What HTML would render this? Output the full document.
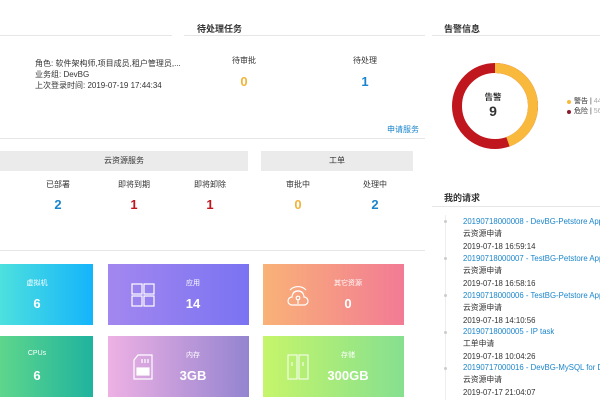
<!DOCTYPE html>
<html><head><meta charset="utf-8"><style>
*{margin:0;padding:0;box-sizing:border-box}
body{width:600px;height:400px;overflow:hidden;background:#fff;font-family:"Liberation Sans","Noto Sans CJK SC",sans-serif;position:relative;color:#333}
.a{position:absolute}
.t{font-size:8px;color:#333;white-space:nowrap}
.h{font-size:9px;color:#333;font-weight:bold}
.line{position:absolute;height:1px;background:#e6e6e6}
.c{text-align:center}
.num{font-size:13px;font-weight:bold}
.card{position:absolute;color:#fff}
.card .l{position:absolute;font-size:7px;width:60px;text-align:center}
.card .n{position:absolute;font-size:13px;font-weight:bold;width:60px;text-align:center}
.clip{position:absolute;left:432px;top:207px;width:168px;height:193px;overflow:hidden}
.req{position:absolute;left:31px;font-size:7.8px;line-height:12.3px;white-space:nowrap}
.req .b{color:#1a85cc}
.dot{position:absolute;left:12px;width:3px;height:3px;border-radius:50%;background:#ccc}
</style></head><body>
<!-- panel 1 -->
<div class="line" style="left:0;top:35px;width:172px"></div>
<div class="a t" style="left:35px;top:58px;line-height:11px">角色: 软件架构师,项目成员,租户管理员,...<br>业务组: DevBG<br>上次登录时间: 2019-07-19 17:44:34</div>
<!-- panel 2 -->
<div class="a h" style="left:197px;top:22px">待处理任务</div>
<div class="line" style="left:184px;top:35px;width:241px"></div>
<div class="a t c" style="left:214px;top:55px;width:60px">待审批</div>
<div class="a num c" style="left:214px;top:74px;width:60px;color:#f0b43c">0</div>
<div class="a t c" style="left:335px;top:55px;width:60px">待处理</div>
<div class="a num c" style="left:335px;top:74px;width:60px;color:#1a85cc">1</div>
<!-- cloud section -->
<div class="a t" style="left:387px;top:124px;color:#1a85cc">申请服务</div>
<div class="line" style="left:0;top:138px;width:425px"></div>
<div class="a t c" style="left:0;top:151px;width:248px;height:20px;line-height:20px;background:#ebebeb">云资源服务</div>
<div class="a t c" style="left:261px;top:151px;width:152px;height:20px;line-height:20px;background:#ebebeb">工单</div>
<div class="a t c" style="left:28px;top:179px;width:60px">已部署</div>
<div class="a num c" style="left:28px;top:197px;width:60px;color:#1a85cc">2</div>
<div class="a t c" style="left:104px;top:179px;width:60px">即将到期</div>
<div class="a num c" style="left:104px;top:197px;width:60px;color:#c0161d">1</div>
<div class="a t c" style="left:180px;top:179px;width:60px">即将卸除</div>
<div class="a num c" style="left:180px;top:197px;width:60px;color:#c0161d">1</div>
<div class="a t c" style="left:268px;top:179px;width:60px">审批中</div>
<div class="a num c" style="left:268px;top:197px;width:60px;color:#f0b43c">0</div>
<div class="a t c" style="left:345px;top:179px;width:60px">处理中</div>
<div class="a num c" style="left:345px;top:197px;width:60px;color:#1a85cc">2</div>
<div class="line" style="left:0;top:250px;width:425px"></div>
<!-- cards -->
<div class="card" style="left:0;top:264px;width:93px;height:61px;background:linear-gradient(90deg,#4de0de,#15b4fb)"><div class="l" style="left:7px;top:14px">虚拟机</div><div class="n" style="left:7px;top:32px">6</div></div>
<div class="card" style="left:108px;top:264px;width:141px;height:61px;background:linear-gradient(90deg,#a387ef,#7a73f2)">
<svg class="a" style="left:23px;top:19px" width="24" height="24" fill="none" stroke="#fff" stroke-width="1.2"><rect x="1" y="1" width="10" height="10"/><rect x="13" y="1" width="10" height="10"/><rect x="1" y="13" width="10" height="10"/><rect x="13" y="13" width="10" height="10"/></svg>
<div class="l" style="left:55px;top:14px">应用</div><div class="n" style="left:55px;top:32px">14</div></div>
<div class="card" style="left:263px;top:264px;width:141px;height:61px;background:linear-gradient(90deg,#f9b277,#f27b95)">
<svg class="a" style="left:22px;top:17px" width="26" height="26" fill="none" stroke="#fff" stroke-width="1.2"><path d="M5 9a11 11 0 0 1 16 0M8 12a7 7 0 0 1 10 0"/><path d="M7 24h12a4 4 0 0 0 0-8 6 6 0 0 0-12 0 4 4 0 0 0 0 8z"/><circle cx="13" cy="17" r="1.8"/><path d="M13 19v4"/></svg>
<div class="l" style="left:55px;top:14px">其它资源</div><div class="n" style="left:55px;top:32px">0</div></div>
<div class="card" style="left:0;top:336px;width:93px;height:61px;background:linear-gradient(90deg,#5ed68c,#1fb39e)"><div class="l" style="left:7px;top:14px">CPUs</div><div class="n" style="left:7px;top:32px">6</div></div>
<div class="card" style="left:108px;top:336px;width:141px;height:61px;background:linear-gradient(90deg,#eeb1e4,#9484d0)">
<svg class="a" style="left:24px;top:18px" width="22" height="26" fill="none" stroke="#fff" stroke-width="1.2"><path d="M6 1h14v24H2V6z"/><path d="M10 5v4M13 5v4M16 5v4"/><rect x="5" y="14" width="12" height="7" fill="#fff"/></svg>
<div class="l" style="left:55px;top:14px">内存</div><div class="n" style="left:55px;top:32px">3GB</div></div>
<div class="card" style="left:263px;top:336px;width:141px;height:61px;background:linear-gradient(90deg,#c6f56a,#86e08f)">
<svg class="a" style="left:24px;top:18px" width="22" height="26" fill="none" stroke="rgba(255,255,255,.8)" stroke-width="1.2"><rect x="1" y="1" width="9" height="24"/><rect x="12" y="1" width="9" height="24"/><path d="M5 8v4M16 8v4"/></svg>
<div class="l" style="left:55px;top:14px">存储</div><div class="n" style="left:55px;top:32px">300GB</div></div>
<!-- alert panel -->
<div class="a h" style="left:444px;top:22px">告警信息</div>
<div class="line" style="left:432px;top:35px;width:168px"></div>
<svg class="a" style="left:450px;top:62px" width="90" height="90"><circle cx="45" cy="44" r="38" fill="none" stroke="#c0161d" stroke-width="10"/><circle cx="45" cy="44" r="38" fill="none" stroke="#f8b93c" stroke-width="10" stroke-dasharray="106 239" transform="rotate(-90 45 44)"/></svg>
<div class="a c" style="left:473px;top:91px;width:40px;font-size:8.5px;font-weight:bold">告警</div>
<div class="a c" style="left:473px;top:103px;width:40px;font-size:14px;font-weight:bold">9</div>
<div class="a" style="left:567px;top:100px;width:4px;height:4px;border-radius:50%;background:#f8b93c"></div>
<div class="a t" style="left:574px;top:96px;font-size:7px;width:26px;overflow:hidden">警告 | <span style="color:#aaa">44</span></div>
<div class="a" style="left:567px;top:110px;width:4px;height:4px;border-radius:50%;background:#8b1a2a"></div>
<div class="a t" style="left:574px;top:106px;font-size:7px;width:26px;overflow:hidden">危险 | <span style="color:#aaa">56</span></div>
<!-- requests -->
<div class="a h" style="left:444px;top:191px">我的请求</div>
<div class="line" style="left:432px;top:206px;width:168px"></div>
<div class="clip">
<div class="a" style="left:13px;top:8px;width:1px;height:185px;background:#eee"></div>
<div class="dot" style="top:13px"></div><div class="req" style="top:9px"><div class="b">20190718000008 - DevBG-Petstore App on vSphere</div>云资源申请<br>2019-07-18 16:59:14</div>
<div class="dot" style="top:50px"></div><div class="req" style="top:46px"><div class="b">20190718000007 - TestBG-Petstore App on vSphere</div>云资源申请<br>2019-07-18 16:58:16</div>
<div class="dot" style="top:87px"></div><div class="req" style="top:83px"><div class="b">20190718000006 - TestBG-Petstore App on vSphere</div>云资源申请<br>2019-07-18 14:10:56</div>
<div class="dot" style="top:124px"></div><div class="req" style="top:119px"><div class="b">20190718000005 - IP task</div>工单申请<br>2019-07-18 10:04:26</div>
<div class="dot" style="top:160px"></div><div class="req" style="top:155px"><div class="b">20190717000016 - DevBG-MySQL for Dev-08</div>云资源申请<br>2019-07-17 21:04:07</div>
</div>
</body></html>
